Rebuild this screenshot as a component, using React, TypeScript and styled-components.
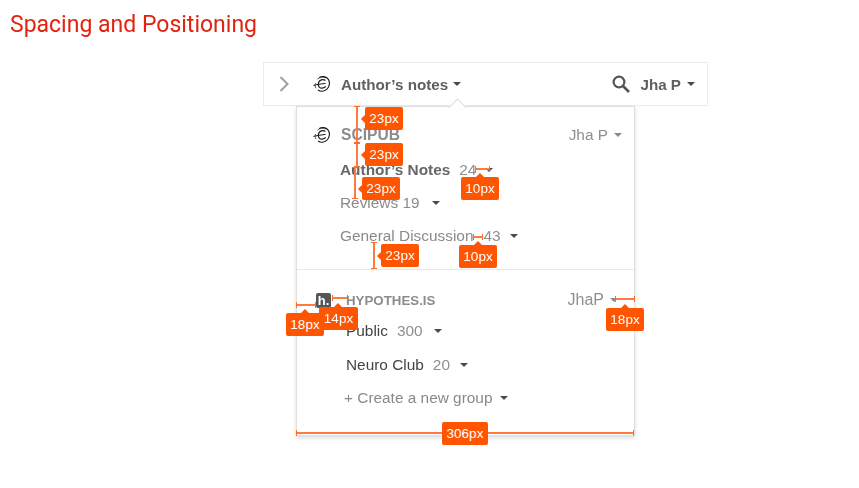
import React from "react";
import styled, { createGlobalStyle } from "styled-components";

const Global = createGlobalStyle`
  html, body { margin: 0; padding: 0; background: #fff; }
  body { width: 859px; height: 488px; overflow: hidden; font-family: "Liberation Sans", Arial, sans-serif; }
`;

const Page = styled.div`
  position: relative;
  width: 859px;
  height: 488px;
  overflow: hidden;
  filter: blur(0.35px);
`;

const Title = styled.h1`
  margin: 0;
  padding: 12px 0 0 10px;
  height: 50px;
  box-sizing: border-box;
  font: 400 23px/26px Roboto, sans-serif;
  color: #e2230f;
`;

const Mock = styled.div`
  width: 445px;
  margin: 12px 0 0 263px;
  display: flex;
  flex-direction: column;
`;

const Bar = styled.header`
  height: 44px;
  box-sizing: border-box;
  border: 1px solid #ececec;
  display: flex;
  align-items: center;
  padding: 0 12px 0 15px;
  color: #5f5f5f;
  font-weight: 700;
  font-size: 15.2px;
`;

const Back = styled.svg`
  width: 10px;
  height: 16px;
  margin-right: 24px;
`;

const BarTitle = styled.span`
  margin-left: 10px;
`;

const Spacer = styled.div`
  flex: 1;
`;

const Search = styled.svg`
  width: 18px;
  height: 18px;
  margin-right: 10px;
`;

const Caret = styled.i<{ $dark?: boolean; $gap?: number }>`
  display: inline-block;
  width: 0;
  height: 0;
  border-left: 4px solid transparent;
  border-right: 4px solid transparent;
  border-top: 4px solid ${(p) => (p.$dark ? "#4a4a4a" : "#8a8a8a")};
  margin-left: ${(p) => p.$gap ?? 6}px;
  flex: none;
`;

const Panel = styled.section`
  position: relative;
  width: 339px;
  height: 330px;
  margin: 0 0 0 33px;
  box-sizing: border-box;
  border: 1px solid #e0e0e0;
  border-top: 1px solid #dedede;
  box-shadow: 0 2px 4px rgba(0, 0, 0, 0.14);
  background: #fff;
`;

const Notch = styled.div`
  position: absolute;
  left: 154px;
  top: -6px;
  width: 12px;
  height: 12px;
  background: #fff;
  border-left: 1px solid #dedede;
  border-top: 1px solid #dedede;
  transform: rotate(45deg);
`;

const Group = styled.div<{ $h: number; $left: number; $right: number; $ruled?: boolean }>`
  height: ${(p) => p.$h}px;
  box-sizing: border-box;
  padding: 0 ${(p) => p.$right}px 0 ${(p) => p.$left}px;
  border-bottom: ${(p) => (p.$ruled ? "1px solid #e8e8e8" : "none")};
  display: flex;
  flex-direction: column;
`;

const GroupHead = styled.div<{ $top: number; $gap: number }>`
  margin-top: ${(p) => p.$top}px;
  height: 20px;
  display: flex;
  align-items: center;
  gap: ${(p) => p.$gap}px;
`;

const GroupName = styled.span<{ $size: number }>`
  font-weight: 700;
  font-size: ${(p) => p.$size}px;
  color: #8c8c8c;
  flex: 1;
`;

const User = styled.span<{ $size: number }>`
  font-size: ${(p) => p.$size}px;
  color: #8f8f8f;
  display: flex;
  align-items: center;
`;

const Rows = styled.ul<{ $top: number; $indent: number }>`
  list-style: none;
  margin: ${(p) => p.$top}px 0 0;
  padding: 0 0 0 ${(p) => p.$indent}px;
`;

const Row = styled.li<{ $h: number; $tone: "bold" | "dark" | "muted"; $shift?: number }>`
  height: ${(p) => p.$h}px;
  display: flex;
  align-items: center;
  font-size: 15.4px;
  margin-left: ${(p) => p.$shift ?? 0}px;
  font-weight: ${(p) => (p.$tone === "bold" ? 700 : 400)};
  color: ${(p) => (p.$tone === "bold" ? "#666" : p.$tone === "dark" ? "#444" : "#8a8a8a")};
`;

const Count = styled.span<{ $gap: number }>`
  font-weight: 400;
  color: #8f8f8f;
  margin-left: ${(p) => p.$gap}px;
`;

const Tag = styled.span<{ $x: number; $y: number; $w?: number; $tip: "left" | "top" | "none" }>`
  position: absolute;
  left: ${(p) => p.$x}px;
  top: ${(p) => p.$y}px;
  width: ${(p) => p.$w ?? 38}px;
  height: 23px;
  background: #ff5500;
  color: #fff;
  border-radius: 2px;
  font: 400 13.5px/23px "Liberation Sans", Arial, sans-serif;
  text-align: center;
  &::before {
    content: "";
    display: ${(p) => (p.$tip === "none" ? "none" : "block")};
    position: absolute;
    width: 0;
    height: 0;
    ${(p) =>
      p.$tip === "left"
        ? `left: -4px; top: 8px; border-top: 4px solid transparent; border-bottom: 4px solid transparent; border-right: 4px solid #ff5500;`
        : `left: 15px; top: -4px; border-left: 4px solid transparent; border-right: 4px solid transparent; border-bottom: 4px solid #ff5500;`}
  }
`;

const VLine = styled.span<{ $x: number; $y: number; $h: number }>`
  position: absolute;
  left: ${(p) => p.$x}px;
  top: ${(p) => p.$y}px;
  height: ${(p) => p.$h}px;
  width: 2px;
  background: #ff7a40;
  &::before, &::after {
    content: "";
    position: absolute;
    left: -2px;
    width: 6px;
    height: 1px;
    background: #ff6a2a;
  }
  &::before { top: 0; }
  &::after { bottom: 0; }
`;

const HLine = styled.span<{ $x: number; $y: number; $w: number }>`
  position: absolute;
  left: ${(p) => p.$x}px;
  top: ${(p) => p.$y}px;
  width: ${(p) => p.$w}px;
  height: 2px;
  background: #ff7a40;
  &::before, &::after {
    content: "";
    position: absolute;
    top: -2px;
    width: 1px;
    height: 6px;
    background: #ff6a2a;
  }
  &::before { left: 0; }
  &::after { right: 0; }
`;

const HBadge = styled.span`
  width: 15px;
  height: 15px;
  border-radius: 2px;
  background: #54565a;
  color: #fff;
  font: 700 13px/15px "Liberation Sans", Arial, sans-serif;
  text-align: center;
  flex: none;
`;

const Scribble = () => (
  <svg width="18" height="18" viewBox="0 0 18 18" fill="none" stroke="#1c1c1c" style={{ flex: "none" }}>
    <path d="M6 2.6C9 0.6 13.4 1.4 15.4 4.4C17.2 7.4 16.6 11.6 14 14.2C11.4 16.6 7.6 16.8 5 15" strokeWidth="1.1" />
    <path d="M4.4 4.2C6.6 2.2 10 1.8 12.4 3" strokeWidth="0.7" />
    <path d="M3 13.2C2 11.6 1.8 9.8 2.6 8" strokeWidth="0.7" />
    <path d="M0.4 10.4L5.4 9.4L12.6 8.4" strokeWidth="1" />
    <path d="M12.4 5.4C9.8 3.6 6.4 5 5.4 8C4.6 11 6.6 13.4 9.4 13.2C10.8 13 12 12.4 12.8 11.4" strokeWidth="1.2" />
  </svg>
);

const notes: [number, number, number][] = [
  [356, 106, 37],
  [356, 143, 24],
  [354, 167, 32],
  [373, 242, 27],
];
const spans: [number, number, number][] = [
  [475, 168, 15],
  [473, 236, 10],
  [296, 304, 20],
  [332, 297, 16],
  [615, 298, 20],
  [296, 432, 338],
];
const tags: [string, number, number, number, "left" | "top" | "none"][] = [
  ["23px", 365, 107, 38, "left"],
  ["23px", 365, 143, 38, "left"],
  ["23px", 362, 177, 38, "left"],
  ["10px", 461, 177, 38, "top"],
  ["23px", 381, 244, 38, "left"],
  ["10px", 459, 245, 38, "top"],
  ["18px", 286, 313, 38, "top"],
  ["14px", 319, 307, 39, "top"],
  ["18px", 606, 308, 38, "top"],
  ["306px", 442, 422, 46, "none"],
];

export default function App() {
  return (
    <Page>
      <Global />
      <Title>Spacing and Positioning</Title>
      <Mock>
        <Bar>
          <Back viewBox="0 0 10 16" fill="none" stroke="#a0a0a0" strokeWidth="2">
            <path d="M1.5 1L8.5 8L1.5 15" />
          </Back>
          <Scribble />
          <BarTitle>Author’s notes</BarTitle>
          <Caret $dark $gap={5} />
          <Spacer />
          <Search viewBox="0 0 18 18" fill="none" stroke="#555" strokeWidth="2.2">
            <circle cx="7" cy="7" r="5.4" />
            <path d="M11 11L17 17" strokeWidth="2.6" />
          </Search>
          Jha P
          <Caret $dark />
        </Bar>
        <Panel>
          <Notch />
          <Group $h={163} $left={16} $right={12} $ruled>
            <GroupHead $top={18} $gap={10}>
              <Scribble />
              <GroupName $size={15.6}>SCIPUB</GroupName>
              <User $size={15.4}>Jha P<Caret $gap={6} /></User>
            </GroupHead>
            <Rows $top={8} $indent={27}>
              <Row $h={33} $tone="bold">Author’s Notes<Count $gap={9}>24</Count><Caret $dark $gap={9} /></Row>
              <Row $h={33} $tone="muted">Reviews 19<Caret $dark $gap={12} /></Row>
              <Row $h={33} $tone="muted">General Discussion<Count $gap={10}>43</Count><Caret $dark $gap={9} /></Row>
            </Rows>
          </Group>
          <Group $h={165} $left={19} $right={16}>
            <GroupHead $top={20} $gap={15}>
              <HBadge>h.</HBadge>
              <GroupName $size={13.3}>HYPOTHES.IS</GroupName>
              <User $size={16}>JhaP<Caret $gap={6} /></User>
            </GroupHead>
            <Rows $top={4} $indent={30}>
              <Row $h={34} $tone="dark">Public<Count $gap={9}>300</Count><Caret $dark $gap={11} /></Row>
              <Row $h={33} $tone="dark">Neuro Club<Count $gap={9}>20</Count><Caret $dark $gap={10} /></Row>
              <Row $h={33} $tone="muted" $shift={-2}>+ Create a new group<Caret $dark $gap={8} /></Row>
            </Rows>
          </Group>
        </Panel>
      </Mock>
      {notes.map(([x, y, h]) => <VLine key={`${x}-${y}`} $x={x} $y={y} $h={h} />)}
      {spans.map(([x, y, w]) => <HLine key={`${x}-${y}`} $x={x} $y={y} $w={w} />)}
      {tags.map(([t, x, y, w, tip]) => <Tag key={`${x}-${y}`} $x={x} $y={y} $w={w} $tip={tip}>{t}</Tag>)}
    </Page>
  );
}
